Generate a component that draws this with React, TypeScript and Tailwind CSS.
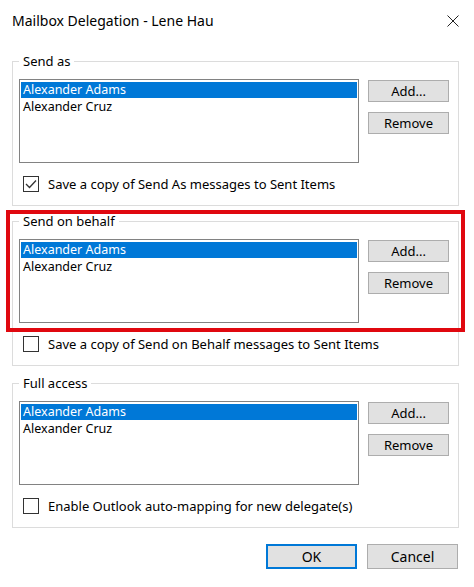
import React from "react";

const font = { fontFamily: '"Noto Sans", "Open Sans", sans-serif' };

function ListBox() {
  return (
    <div className="w-[340px] h-[84px] border border-[#828282] bg-white px-[1px] pt-[2px] shrink-0">
      <div className="h-[16px] bg-[#0078d7] text-white pl-[2px] text-[12.5px] leading-[16px]">Alexander Adams</div>
      <div className="h-[17px] pt-[1px] text-black pl-[2px] text-[12.5px] leading-[16px]">Alexander Cruz</div>
    </div>
  );
}

function Btn({ children }: { children: React.ReactNode }) {
  return (
    <div className="w-[81px] h-[22px] border border-[#adadad] bg-[#e1e1e1] flex items-center justify-center text-[13px] text-black leading-none">
      {children}
    </div>
  );
}

function Check({ checked, label }: { checked?: boolean; label: string }) {
  return (
    <div className="flex items-center h-[16px] ml-[4px]">
      <div className="w-[16px] h-[16px] border border-[#333333] bg-white flex items-center justify-center shrink-0">
        {checked && (
          <svg width="12" height="10" viewBox="0 0 12 10">
            <path d="M1 5 L4.5 8.5 L11 1.5" fill="none" stroke="#333" strokeWidth="1.3" />
          </svg>
        )}
      </div>
      <span className="ml-[9px] text-[13px] leading-[16px] text-black">{label}</span>
    </div>
  );
}

function Group({
  title,
  checked,
  checkLabel,
  className,
}: {
  title: string;
  checked?: boolean;
  checkLabel: string;
  className?: string;
}) {
  return (
    <fieldset className={"w-[447px] border border-[#dcdcdc] pl-[6px] pr-[8px] pb-[13px] " + (className ?? "")}>
      <legend className="px-[4px] text-[13px] leading-[16px] text-black">{title}</legend>
      <div className="flex mt-[10px]">
        <ListBox />
        <div className="ml-[9px] flex flex-col gap-[10px] pt-[1px]">
          <Btn>Add...</Btn>
          <Btn>Remove</Btn>
        </div>
      </div>
      <div className="mt-[13px]">
        <Check checked={checked} label={checkLabel} />
      </div>
    </fieldset>
  );
}

export default function App() {
  return (
    <div className="relative w-[474px] h-[587px] bg-white overflow-hidden" style={font}>
      <div className="h-[41px] flex items-center justify-between pl-[12px] pr-[15px]">
        <span className="text-[14px] text-black">Mailbox Delegation - Lene Hau</span>
        <svg width="12" height="12" viewBox="0 0 12 12">
          <path d="M0.5 0.5 L11.5 11.5 M11.5 0.5 L0.5 11.5" stroke="#222" strokeWidth="1" />
        </svg>
      </div>
      <div className="pl-[12px] flex flex-col">
        <Group className="mt-[12px]" title="Send as" checked checkLabel="Save a copy of Send As messages to Sent Items" />
        <Group className="mt-[7px]" title="Send on behalf" checkLabel="Save a copy of Send on Behalf messages to Sent Items" />
        <Group className="mt-[9px]" title="Full access" checkLabel="Enable Outlook auto-mapping for new delegate(s)" />
        <div className="flex justify-end gap-[10px] mt-[16px] w-[446px]">
          <div className="w-[91px] h-[25px] border-2 border-[#0078d7] bg-[#e1e1e1] flex items-center justify-center text-[14px] text-black">OK</div>
          <div className="w-[91px] h-[25px] border border-[#adadad] bg-[#e1e1e1] flex items-center justify-center text-[14px] text-black">Cancel</div>
        </div>
      </div>
      <div className="absolute left-[6px] top-[210px] w-[459px] h-[122px] border-[4px] border-[#e0080f]" />
    </div>
  );
}
